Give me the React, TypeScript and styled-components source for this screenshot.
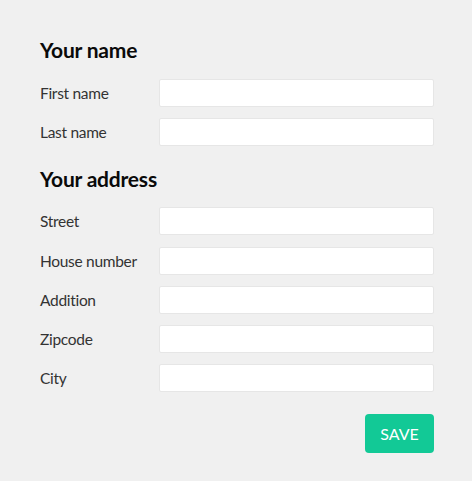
import styled, {createGlobalStyle} from "styled-components";

const GlobalStyle = createGlobalStyle`
  html, body {
    margin: 0;
    padding: 0;
    background: #ffffff;
  }
  * {
    box-sizing: border-box;
  }
`

const Panel = styled.form`
  width: 472px;
  height: 481px;
  background-color: #f0f0f0;
  padding: 38px 38px 0 40px;
  font-family: Lato, "Liberation Sans", sans-serif;
  display: flex;
  flex-direction: column;
`

const Heading = styled.h2<{ first?: boolean }>`
  margin: ${props => props.first ? "0 0 17px" : "21px 0 16px"} 0;
  font-size: 21px;
  line-height: 24px;
  font-weight: 700;
  letter-spacing: -0.2px;
  color: #0a0a0a;
`

const Fields = styled.div`
  display: flex;
  flex-direction: column;
  gap: 11.3px;
`

const Row = styled.label`
  display: grid;
  grid-template-columns: 119px 275px;
  align-items: center;
`

const LabelText = styled.span`
  font-size: 15.5px;
  font-weight: 400;
  letter-spacing: -0.3px;
  color: #333;
`

const Input = styled.input`
  height: 28px;
  border: 1px solid #e6e6e6;
  border-radius: 2px;
  background: #fff;
  outline: none;
  padding: 0 8px;
  font-family: inherit;
  font-size: 15px;
`

const Actions = styled.div`
  display: flex;
  justify-content: flex-end;
  margin-top: 21.5px;
`

const SaveButton = styled.button`
  width: 69px;
  height: 39px;
  border: none;
  border-radius: 4px;
  background-color: #12c996;
  color: #fff;
  font-family: inherit;
  font-size: 16px;
  font-weight: 400;
  cursor: pointer;
`

const nameFields = ["First name", "Last name"];
const addressFields = ["Street", "House number", "Addition", "Zipcode", "City"];

export default function App() {
    return <>
        <GlobalStyle/>
        <Panel onSubmit={e => e.preventDefault()}>
            <Heading first>Your name</Heading>
            <Fields>
                {nameFields.map(field => <Row key={field}>
                    <LabelText>{field}</LabelText>
                    <Input type="text"/>
                </Row>)}
            </Fields>
            <Heading>Your address</Heading>
            <Fields>
                {addressFields.map(field => <Row key={field}>
                    <LabelText>{field}</LabelText>
                    <Input type="text"/>
                </Row>)}
            </Fields>
            <Actions>
                <SaveButton type="submit">SAVE</SaveButton>
            </Actions>
        </Panel>
    </>
}
